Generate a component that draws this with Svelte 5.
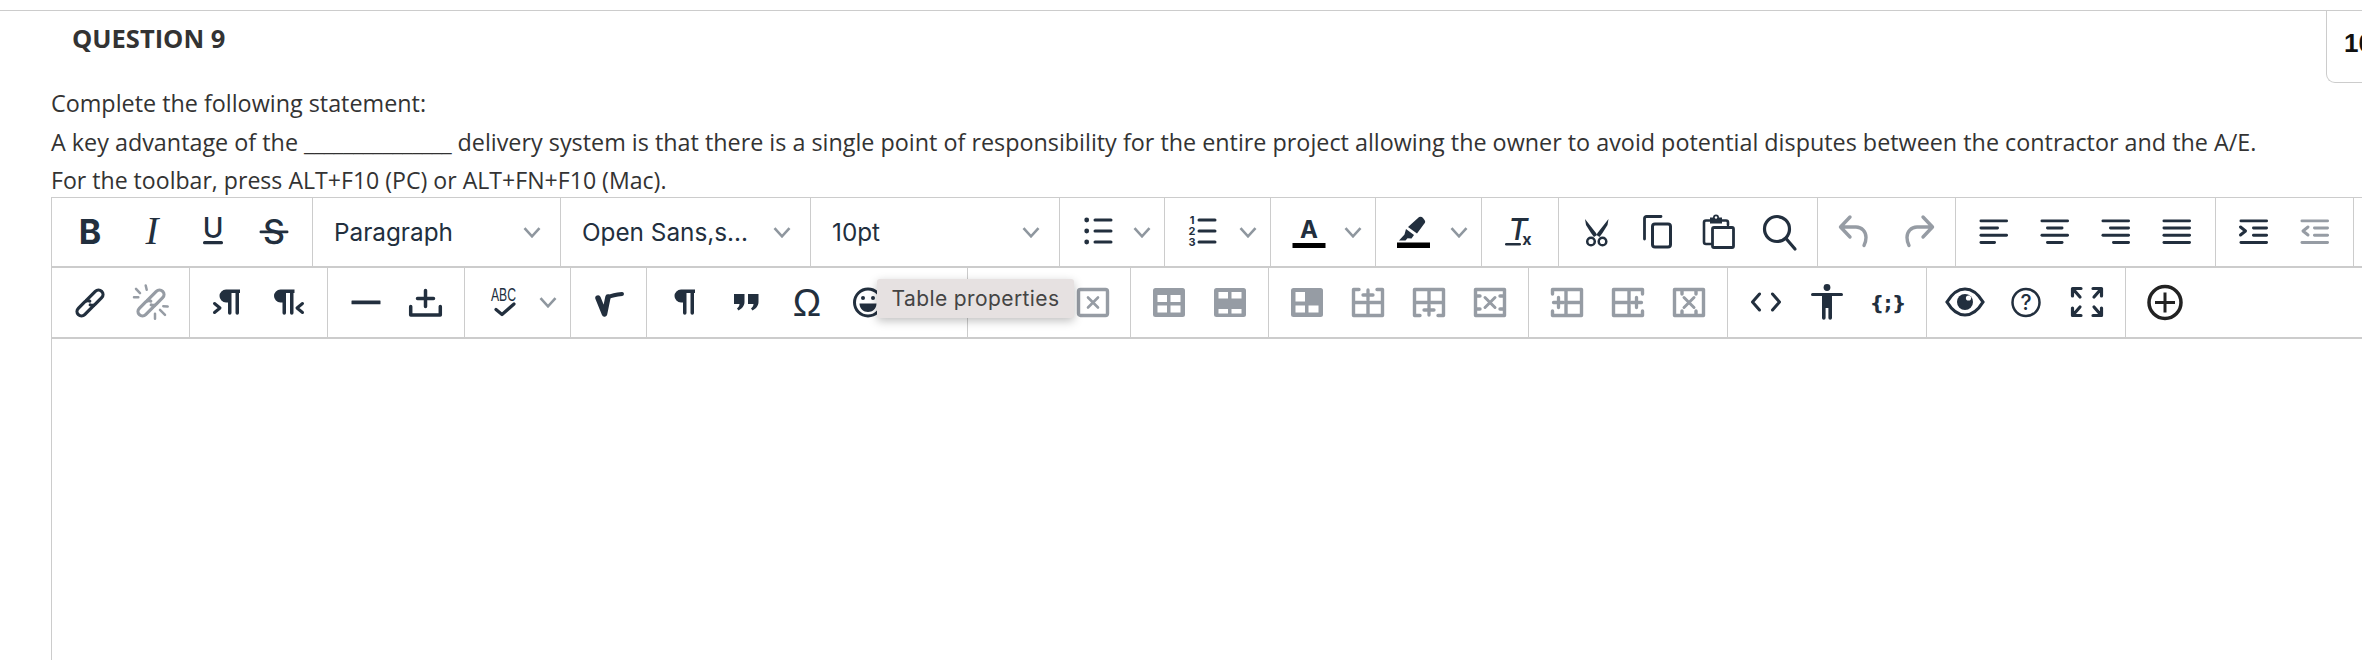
<script>
    // icons are drawn in a 40x40 box, one unit is one screen pixel
    const line = (d, w = 2.7) => `<path d="${d}" fill="none" stroke="currentColor" stroke-width="${w}" stroke-linecap="round" stroke-linejoin="round"/>`;
    const bars = (rows) => rows.map(([x1, x2], i) => `<rect x="${x1}" y="${7.4 + i * 7.2}" width="${x2 - x1}" height="2.9" rx="1.4" fill="currentColor"/>`).join('');
    const label = (t, x, y, size, weight = 700, family = 'Inter', extra = '') =>
        `<text x="${x}" y="${y}" font-family="${family}" font-size="${size}" font-weight="${weight}" text-anchor="middle" fill="currentColor" ${extra}>${t}</text>`;
    const pilcrow = (dx) => `<path transform="translate(${dx} 0)" fill="currentColor" d="M18 6.500H32V10H31V30a1.700 1.700 0 0 1-3.500 0V10H23.500V30a1.700 1.700 0 0 1-3.500 0V19.500H18a6.500 6.500 0 0 1 0-13z"/>`;
    const chain = `<g transform="rotate(-45 20 20)">` +
        line('M21 24.500H8a4.500 4.500 0 0 1 0-9h9a4.500 4.500 0 0 1 4.200 3', 3.200) +
        line('M19 15.500H32a4.500 4.500 0 0 1 0 9h-9a4.500 4.500 0 0 1-4.200-3', 3.200) + `</g>`;
    const grid = (cells) => `<rect x="4" y="5" width="32" height="29" rx="2.500" fill="currentColor"/>` +
        cells.map(([x, y, w, h]) => `<rect x="${x}" y="${y}" width="${w}" height="${h}" fill="#fff"/>`).join('');
    const plus = (x, y, a = 5, w = 3.300) => line(`M${x - a} ${y}H${x + a}M${x} ${y - a}V${y + a}`, w);
    const cross = (x, y, a = 5, w = 3) => line(`M${x - a} ${y - a}L${x + a} ${y + a}M${x + a} ${y - a}L${x - a} ${y + a}`, w);
    const quoteMark = `M8 11h10.500v8c0 4-3 7-6 8.500l-1.500-2c1.500-1 2.500-3 2.500-4.500H8z`;

    const ICONS = {
        bold: label('B', 19, 32, 34),
        italic: label('I', 20, 32, 39, 400, 'Liberation Serif', 'font-style="italic"'),
        underline: label('U', 20, 26, 28, 500) + `<rect x="10" y="29" width="20" height="3.200" rx="1.500" fill="currentColor"/>`,
        strike: label('S', 20, 32, 34, 500) + `<rect x="5.500" y="18.500" width="29" height="2.800" rx="1.400" fill="currentColor"/>`,
        bullist: `<circle cx="8.700" cy="8" r="2.400" fill="currentColor"/><circle cx="8.700" cy="19" r="2.400" fill="currentColor"/><circle cx="8.700" cy="30" r="2.400" fill="currentColor"/>` +
            line('M17 8H33M17 19H33M17 30H33', 3),
        numlist: label('1', 9, 12, 11) + label('2', 9, 23, 11) + label('3', 9, 34, 11) + line('M16 8H32M16 19H32M16 30H32', 3),
        forecolor: label('A', 20, 26, 24) + `<rect x="3.500" y="31" width="33" height="5" fill="#000"/>`,
        hilite: `<path fill="currentColor" d="M24 6a3 3 0 0 1 5 0l1.500 2a3 3 0 0 1-.5 4l-7 9.500-9-6.500z"/><path fill="currentColor" d="M12 17l8 6-2.500 3.500-4-.3-2 2.300H5l5.500-6z"/><rect x="3" y="30.500" width="33" height="5.500" fill="#000"/>`,
        clear: label('T', 18, 28, 30, 500, 'Inter', 'font-style="italic"') + label('x', 27, 33, 16) + `<rect x="5" y="31" width="16" height="2.600" rx="1.300" fill="currentColor"/>`,
        cut: `<circle cx="14" cy="29.500" r="3.800" fill="none" stroke="currentColor" stroke-width="2.500"/><circle cx="25.500" cy="29.500" r="3.800" fill="none" stroke="currentColor" stroke-width="2.500"/>` +
            `<path fill="currentColor" d="M8 7l11 14 1 2-3 2-3-4-5-8zM31.500 7L20.500 21l-1 2 3 2 3-4 5-8z"/>`,
        copy: line('M6.500 27V6.500a2 2 0 0 1 2-2H23', 2.800) + `<rect x="14.500" y="12" width="18" height="23" rx="2.500" fill="none" stroke="currentColor" stroke-width="3"/>`,
        paste: line('M30 13V10.500a2 2 0 0 0-2-2H8a2 2 0 0 0-2 2V30a2 2 0 0 0 2 2h5', 2.600) + `<rect x="14.500" y="15.500" width="21" height="20" rx="1.500" fill="#fff" stroke="currentColor" stroke-width="2.800"/>` +
            `<path fill="currentColor" d="M12 5.500h3a3 3 0 0 1 6 0h3v6H12z"/><circle cx="18" cy="5.500" r="1.200" fill="#fff"/>`,
        search: `<circle cx="18" cy="17" r="12.500" fill="none" stroke="currentColor" stroke-width="3.200"/>` + line('M27 26.500L36 37', 3.200),
        undo: line('M14 5L4.500 15L14 25M5 15H20c6 0 10 5 10 10.500c0 3-1 6-2 8', 3.400),
        redo: line('M26 5L35.500 15L26 25M35 15H20c-6 0-10 5-10 10.500c0 3 1 6 2 8', 3.400),
        alignleft: bars([[5.500, 34], [5.500, 25], [5.500, 34], [5.500, 22]]),
        aligncenter: bars([[5.500, 34], [11, 28.500], [5.500, 34], [11, 28.500]]),
        alignright: bars([[5.500, 34], [13, 34], [5.500, 34], [16, 34]]),
        justify: bars([[5.500, 34], [5.500, 34], [5.500, 34], [5.500, 34]]),
        indent: bars([[5.500, 34], [18, 34], [18, 34], [5.500, 34]]) + line('M6.500 15l5 4-5 4', 3),
        outdent: bars([[5.500, 34], [18, 34], [18, 34], [5.500, 34]]) + line('M13 15l-5 4 5 4', 3),

        link: chain,
        unlink: chain + line('M5 5.800L9 10.200M14.700 2.500L15.700 6.800M3 14.200H7.300M24 30.800V35.800M29 26.800L34 31.800M32.300 23.200L36.700 23.500', 2.500),
        ltr: pilcrow(0) + line('M6.500 20.500L12 25L6.500 29.500', 3),
        rtl: pilcrow(-6.500) + line('M33.500 20.500L28 25L33.500 29.500', 3),
        hr: `<rect x="5.500" y="17.500" width="29" height="3.800" rx="0.500" fill="currentColor"/>`,
        pagebreak: line('M4.700 23.500V32H34.300V23.500', 3.500) + plus(19.500, 15.500, 8, 3.500),
        spell: label('ABC', 20.500, 17.500, 19, 400, 'Liberation Sans', 'textLength="25" lengthAdjust="spacingAndGlyphs"') + line('M13 26.500L19 31.500L31 21', 3.200),
        sqrt: line('M9 15L15.500 31L19 14', 5.500) + line('M19 14Q24 12 33 11', 4),
        para: pilcrow(-2),
        quote: `<path fill="currentColor" d="${quoteMark}"/><path transform="translate(14 0)" fill="currentColor" d="${quoteMark}"/>`,
        omega: label('Ω', 20, 32.500, 38, 400, 'Liberation Sans'),
        emoji: `<circle cx="20" cy="19.500" r="13.500" fill="none" stroke="currentColor" stroke-width="3"/><circle cx="15" cy="15" r="2" fill="currentColor"/><circle cx="25" cy="15" r="2" fill="currentColor"/><path fill="currentColor" d="M11.500 20.500h17c0 5-4 8.500-8.500 8.500s-8.500-3.500-8.500-8.500z"/>`,
        table: grid([[8.500, 12, 9.500, 7], [21.500, 12, 10, 7], [8.500, 22.500, 9.500, 7], [21.500, 22.500, 10, 7]]),
        tabledelete: `<rect x="5.500" y="6.500" width="29" height="26" rx="2" fill="none" stroke="currentColor" stroke-width="3.400"/>` + cross(20, 19.500, 5, 2.600),
        rowshade: grid([[8.500, 9, 9.500, 6.500], [21.500, 9, 10, 6.500], [8.500, 26, 9.500, 4.500], [21.500, 26, 10, 4.500]]),
        cellshade: grid([[8.500, 9, 9.500, 9.500], [8.500, 22.500, 9.500, 7], [21.500, 22.500, 10, 7]]),
        rowbefore: line('M11 6.500H5.500V32.500H34.500V6.500H29M5.500 19.500H34.500M20 19.500V32.500', 3.400) + plus(20, 12),
        rowafter: line('M11 32.500H5.500V6.500H34.500V32.500H29M5.500 19.500H34.500M20 6.500V19.500', 3.400) + plus(20, 27),
        rowdelete: line('M5.500 6.500H34.500V32.500H5.500ZM5.500 13H10M5.500 26H10M34.500 13H30M34.500 26H30', 3.400) + cross(20, 19.500),
        colbefore: line('M5.500 11V6.500H34.500V32.500H5.500V28M19 6.500V32.500M19 19.500H34.500', 3.400) + plus(11.500, 19.500),
        colafter: line('M34.500 11V6.500H5.500V32.500H34.500V28M21 6.500V32.500M5.500 19.500H21', 3.400) + plus(28.500, 19.500),
        coldelete: line('M5.500 6.500H34.500V32.500H5.500ZM13 6.500V11M27 6.500V11M13 32.500V28M27 32.500V28', 3.400) + cross(20, 19.500),
        code: line('M13.500 11L6.500 19L13.500 27M26.500 11L33.500 19L26.500 27', 3),
        a11y: `<circle cx="20" cy="4.500" r="3.400" fill="currentColor"/><rect x="4" y="10" width="32" height="3" rx="1.500" fill="currentColor"/>` +
            `<path fill="currentColor" d="M15 11h10v24a1.800 1.800 0 0 1-3.600 0V25h-2.800v10a1.800 1.800 0 0 1-3.600 0z"/>`,
        braces: label('{;}', 20, 27, 20, 700, 'DejaVu Sans'),
        eye: `<path fill="none" stroke="currentColor" stroke-width="3.200" d="M2 19C8 9 14 6 20 6S32 9 38 19C32 29 26 32 20 32S8 29 2 19z"/><circle cx="20" cy="19" r="8" fill="currentColor"/><circle cx="23.500" cy="15" r="2.600" fill="#fff"/>`,
        help: `<circle cx="20" cy="19.500" r="13.500" fill="none" stroke="currentColor" stroke-width="2.500"/>` + label('?', 20, 27, 21, 500),
        fullscreen: line('M5.500 13V5.500H14M6 6L13 14M34.500 13V5.500H26M34 6L27 14M5.500 25V32.500H14M6 32L13 24M34.500 25V32.500H26M34 32L27 24', 3.200),
        add: `<circle cx="20" cy="19.500" r="16" fill="none" stroke="#222" stroke-width="3.500"/><path d="M10 19.500H30M20 9.500V29.500" stroke="#222" stroke-width="3"/>`,
    };

    const DISABLED = new Set(['unlink', 'undo', 'redo', 'outdent', 'table', 'tabledelete', 'rowshade', 'cellshade',
        'rowbefore', 'rowafter', 'rowdelete', 'colbefore', 'colafter', 'coldelete']);

    const ROW_1 = [
        { w: 261, items: ['bold', 'italic', 'underline', 'strike'] },
        { w: 248, select: 'Paragraph' },
        { w: 250, select: 'Open Sans,s...' },
        { w: 249, select: '10pt' },
        { w: 105, items: ['bullist', '>'] },
        { w: 106, items: ['numlist', '>'] },
        { w: 105, items: ['forecolor', '>'] },
        { w: 106, items: ['hilite', '>'] },
        { w: 77, items: ['clear'] },
        { w: 259, items: ['cut', 'copy', 'paste', 'search'] },
        { w: 138, items: ['undo', 'redo'] },
        { w: 260, items: ['alignleft', 'aligncenter', 'alignright', 'justify'] },
        { w: 138, items: ['indent', 'outdent'] },
        { w: 120, items: [] },
    ];

    const ROW_2 = [
        { w: 138, items: ['link', 'unlink'] },
        { w: 138, items: ['ltr', 'rtl'] },
        { w: 137, items: ['hr', 'pagebreak'] },
        { w: 106, items: ['spell', '>'] },
        { w: 76, items: ['sqrt'] },
        { w: 321, items: ['para', 'quote', 'omega', 'emoji', 'table'] },
        { w: 163, items: ['table', '>', 'tabledelete'] },
        { w: 138, items: ['table', 'rowshade'] },
        { w: 260, items: ['cellshade', 'rowbefore', 'rowafter', 'rowdelete'] },
        { w: 199, items: ['colbefore', 'colafter', 'coldelete'] },
        { w: 199, items: ['code', 'a11y', 'braces'] },
        { w: 199, items: ['eye', 'help', 'fullscreen'] },
        { w: 78, items: ['add'], last: true },
    ];
</script>

{#snippet chevron()}
    <svg class="chev-icon" width="18" height="11" viewBox="0 0 18 11"><path d="M1.500 1.200L9 9.300L16.500 1.200" fill="none" stroke="currentColor" stroke-width="2.600"/></svg>
{/snippet}

{#snippet row(groups)}
    <div class="row">
        {#each groups as g}
            <div class="group" class:last={g.last} style="width: {g.w}px">
                {#if g.select}
                    <span class="select">{g.select}{@render chevron()}</span>
                {:else}
                    {#each g.items as item}
                        {#if item === '>'}
                            <span class="chev">{@render chevron()}</span>
                        {:else}
                            <span class="btn" class:disabled={DISABLED.has(item)}>
                                <svg width="40" height="40" viewBox="0 0 40 40">{@html ICONS[item]}</svg>
                            </span>
                        {/if}
                    {/each}
                {/if}
            </div>
        {/each}
    </div>
{/snippet}

<div class="page">
    <header class="head">
        <h2>QUESTION 9</h2>
        <div class="points">10 points</div>
    </header>

    <div class="question">
        <p>Complete the following statement:</p>
        <p class="second">A key advantage of the <span class="blank">_______________</span> delivery system is that there is a single point of responsibility for the entire project allowing the owner to avoid potential disputes between the contractor and the A/E.</p>
        <p class="third">For the toolbar, press ALT+F10 (PC) or ALT+FN+F10 (Mac).</p>
    </div>

    <div class="editor">
        {@render row(ROW_1)}
        {@render row(ROW_2)}
        <div class="tooltip">Table properties</div>
    </div>
</div>

<style>
    :global(body) {
        margin: 0;
        background: #fff;
        overflow: hidden;
    }
    .page {
        width: 2362px;
        height: 660px;
        overflow: hidden;
        box-sizing: border-box;
        padding-top: 10px;
        font-family: "Open Sans", sans-serif;
        color: #333;
    }
    .head {
        display: flex;
        justify-content: space-between;
        height: 77px;
        border-top: 1px solid #ccc;
    }
    h2 {
        margin: 0;
        padding: 10px 0 0 72px;
        font-size: 25.500px;
        line-height: 34px;
        font-weight: 700;
    }
    .points {
        width: 36px;
        box-sizing: border-box;
        height: 72px;
        padding: 17px 0 0 17px;
        border: 1px solid #ccc;
        border-top: 0;
        border-right: 0;
        border-bottom-left-radius: 9px;
        font-family: "Liberation Sans", sans-serif;
        font-weight: 700;
        font-size: 26px;
        line-height: 30px;
        color: #111;
        white-space: nowrap;
        overflow: hidden;
    }
    .question {
        padding-left: 51px;
    }
    p {
        margin: 0;
        font-size: 23.350px;
        line-height: 31px;
        white-space: nowrap;
    }
    .blank {
        letter-spacing: -0.4px;
    }
    .second {
        margin-top: 8px;
    }
    .third {
        margin-top: 7px;
        font-size: 23.100px;
    }
    .editor {
        position: relative;
        margin: 1px 0 0 51px;
        width: 2500px;
        height: 470px;
        border-left: 1px solid #ccc;
        border-top: 1px solid #ccc;
        color: #222f3e;
    }
    .row {
        display: flex;
        height: 69px;
        border-bottom: 2px solid #ccc;
    }
    .row:first-child {
        height: 68px;
    }
    .group {
        display: flex;
        flex: none;
        align-items: center;
        box-sizing: border-box;
        padding: 0 8px;
        border-right: 1px solid #ccc;
    }
    .group.last {
        border-right: 0;
    }
    .btn {
        flex: 1;
        display: flex;
        justify-content: center;
        align-items: center;
    }
    .btn.disabled {
        color: #969ca4;
    }
    .chev {
        flex: none;
        width: 29px;
        display: flex;
        justify-content: center;
    }
    .chev-icon {
        flex: none;
        color: #8f979f;
    }
    .select {
        flex: 1;
        display: flex;
        align-items: center;
        justify-content: space-between;
        padding: 0 11px 0 13px;
        font-family: Inter, sans-serif;
        font-size: 24.300px;
        color: #222f3e;
    }
    .tooltip {
        position: absolute;
        left: 825px;
        top: 81px;
        width: 197px;
        height: 39px;
        box-sizing: border-box;
        text-align: center;
        background: #e6e1e1;
        border-radius: 3px;
        box-shadow: 0 3px 10px rgba(0, 0, 0, 0.25);
        font-family: Inter, sans-serif;
        font-size: 21px;
        line-height: 39px;
        letter-spacing: 0.4px;
        color: #444;
    }
</style>
